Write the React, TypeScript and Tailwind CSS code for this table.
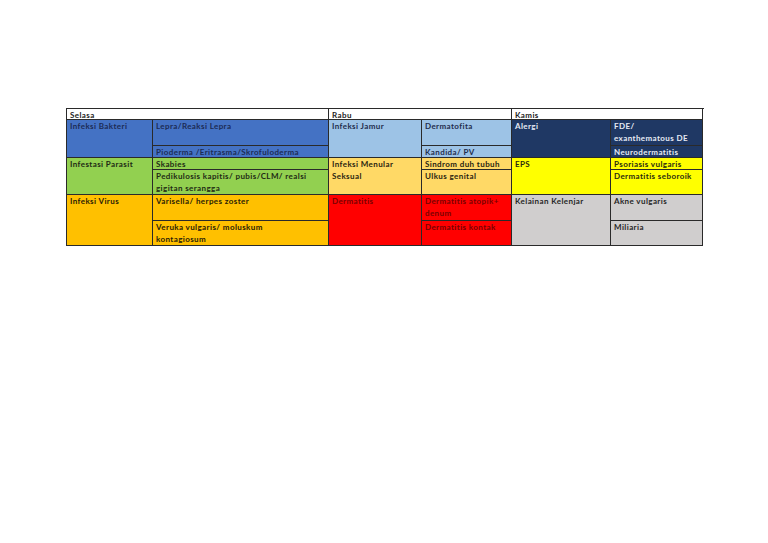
import type { ReactNode } from 'react'

// Jadwal poli kulit — tabel warna per kelompok penyakit

type CellProps = {
  className: string
  children?: ReactNode
}

function Cell({ className, children }: CellProps) {
  return (
    <div className={`overflow-hidden whitespace-nowrap border-r border-b border-[#2a2a2a] px-[3px] leading-[12px] ${className}`}>
      {children}
    </div>
  )
}

export default function App() {
  return (
    <div className="min-h-[543px] w-[768px] bg-white pl-[66px] pt-[108px] font-['Lato','Liberation_Sans',sans-serif] text-[8px] font-bold tracking-[0.4px]">
      <div className="grid w-[638px] grid-cols-[86px_176px_93px_90px_99px_92px] grid-rows-[11px_26px_12px_12px_25px_26px_25px] border-t border-l border-[#2a2a2a]">
        {/* header */}
        <Cell className="col-span-2 bg-white text-[#222] leading-[9px]">Selasa</Cell>
        <Cell className="col-span-2 bg-white text-[#222] leading-[9px]">Rabu</Cell>
        <Cell className="col-span-2 bg-white text-[#222] leading-[9px]">Kamis</Cell>

        {/* baris 1 */}
        <Cell className="row-span-2 bg-[#4472c4] text-[#1c2b55]">Infeksi Bakteri</Cell>
        <Cell className="bg-[#4472c4] text-[#1c2b55]">Lepra/Reaksi Lepra</Cell>
        <Cell className="row-span-2 bg-[#9dc3e6] text-[#1f2d4d]">Infeksi Jamur</Cell>
        <Cell className="bg-[#9dc3e6] text-[#1f2d4d]">Dermatofita</Cell>
        <Cell className="row-span-2 bg-[#1f3864] text-[#e6ebf5]">Alergi</Cell>
        <Cell className="bg-[#1f3864] text-[#e6ebf5]">
          FDE/
          <br />
          exanthematous DE
        </Cell>
        <Cell className="bg-[#4472c4] text-[#1c2b55] leading-[11px]">Pioderma /Eritrasma/Skrofuloderma</Cell>
        <Cell className="bg-[#9dc3e6] text-[#1f2d4d] leading-[11px]">Kandida/ PV</Cell>
        <Cell className="bg-[#1f3864] text-[#e6ebf5] leading-[11px]">Neurodermatitis</Cell>

        {/* baris 2 */}
        <Cell className="row-span-2 bg-[#92d050] text-[#1e2a14]">Infestasi Parasit</Cell>
        <Cell className="bg-[#92d050] text-[#1e2a14] leading-[11px]">Skabies</Cell>
        <Cell className="row-span-2 bg-[#ffd966] text-[#2a2410]">
          Infeksi Menular
          <br />
          Seksual
        </Cell>
        <Cell className="bg-[#ffd966] text-[#2a2410] leading-[11px]">Sindrom duh tubuh</Cell>
        <Cell className="row-span-2 bg-[#ffff00] text-[#2a2a10]">EPS</Cell>
        <Cell className="bg-[#ffff00] text-[#2a2a10] leading-[11px]">Psoriasis vulgaris</Cell>
        <Cell className="bg-[#92d050] text-[#1e2a14]">
          Pedikulosis kapitis/ pubis/CLM/ realsi
          <br />
          gigitan serangga
        </Cell>
        <Cell className="bg-[#ffd966] text-[#2a2410]">Ulkus genital</Cell>
        <Cell className="bg-[#ffff00] text-[#2a2a10]">Dermatitis seboroik</Cell>

        {/* baris 3 */}
        <Cell className="row-span-2 bg-[#ffc000] text-[#2a2006]">Infeksi Virus</Cell>
        <Cell className="bg-[#ffc000] text-[#2a2006]">Varisella/ herpes zoster</Cell>
        <Cell className="row-span-2 bg-[#ff0000] text-[#7a0000]">Dermatitis</Cell>
        <Cell className="bg-[#ff0000] text-[#7a0000]">
          Dermatitis atopik+
          <br />
          denum
        </Cell>
        <Cell className="row-span-2 bg-[#d0cece] text-[#262626]">Kelainan Kelenjar</Cell>
        <Cell className="bg-[#d0cece] text-[#262626]">Akne vulgaris</Cell>
        <Cell className="bg-[#ffc000] text-[#2a2006]">
          Veruka vulgaris/ moluskum
          <br />
          kontagiosum
        </Cell>
        <Cell className="bg-[#ff0000] text-[#7a0000]">Dermatitis kontak</Cell>
        <Cell className="bg-[#d0cece] text-[#262626]">Miliaria</Cell>
      </div>
    </div>
  )
}
